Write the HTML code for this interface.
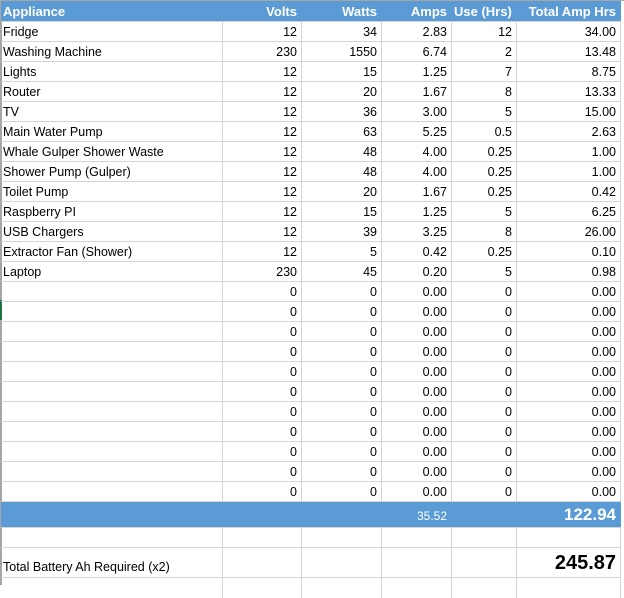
<!DOCTYPE html>
<html><head><meta charset="utf-8"><style>
*{margin:0;padding:0;box-sizing:border-box}
body{width:624px;height:585px;background:#fff;font-family:"Liberation Sans",Arial,sans-serif;font-size:12.5px;color:#000;overflow:hidden;position:relative}
.r{position:absolute;left:1px;display:flex;border-bottom:1px solid #d4d4d4}
.c{flex:none;border-right:1px solid #d4d4d4;padding:0 4px;white-space:nowrap;overflow:hidden;display:flex;align-items:center;justify-content:flex-end}
.c:first-child{justify-content:flex-start;padding-left:2px}
.w1{width:222px}.w2{width:79px}.w3{width:80px}.w4{width:70px}.w5{width:65px}.w6{width:104px}
.h{background:#5b9bd5;color:#fff;font-weight:bold;font-size:13px;border-bottom:1px solid #d4d4d4}
.h .c{border-right-color:#5b9bd5}
.b{background:#5b9bd5;color:#fff}
.b .c{border-right-color:#5b9bd5}
</style></head><body>
<div style="position:absolute;left:0;top:0;width:2px;height:585px;background:#a6a6a6"></div>
<div style="position:absolute;left:0;top:300px;width:2px;height:20px;background:#217346"></div>
<div style="position:absolute;left:0;top:0;width:624px;height:1px;background:#a6a6a6"></div>

<div class="r h" style="top:1px;height:21px"><div class="c w1">Appliance</div><div class="c w2">Volts</div><div class="c w3">Watts</div><div class="c w4">Amps</div><div class="c w5" style="justify-content:flex-start;padding-left:2px">Use (Hrs)</div><div class="c w6">Total Amp Hrs</div></div>

<div class="r" style="top:22px;height:20px"><div class="c w1">Fridge</div><div class="c w2">12</div><div class="c w3">34</div><div class="c w4">2.83</div><div class="c w5">12</div><div class="c w6">34.00</div></div>
<div class="r" style="top:42px;height:20px"><div class="c w1">Washing Machine</div><div class="c w2">230</div><div class="c w3">1550</div><div class="c w4">6.74</div><div class="c w5">2</div><div class="c w6">13.48</div></div>
<div class="r" style="top:62px;height:20px"><div class="c w1">Lights</div><div class="c w2">12</div><div class="c w3">15</div><div class="c w4">1.25</div><div class="c w5">7</div><div class="c w6">8.75</div></div>
<div class="r" style="top:82px;height:20px"><div class="c w1">Router</div><div class="c w2">12</div><div class="c w3">20</div><div class="c w4">1.67</div><div class="c w5">8</div><div class="c w6">13.33</div></div>
<div class="r" style="top:102px;height:20px"><div class="c w1">TV</div><div class="c w2">12</div><div class="c w3">36</div><div class="c w4">3.00</div><div class="c w5">5</div><div class="c w6">15.00</div></div>
<div class="r" style="top:122px;height:20px"><div class="c w1">Main Water Pump</div><div class="c w2">12</div><div class="c w3">63</div><div class="c w4">5.25</div><div class="c w5">0.5</div><div class="c w6">2.63</div></div>
<div class="r" style="top:142px;height:20px"><div class="c w1">Whale Gulper Shower Waste</div><div class="c w2">12</div><div class="c w3">48</div><div class="c w4">4.00</div><div class="c w5">0.25</div><div class="c w6">1.00</div></div>
<div class="r" style="top:162px;height:20px"><div class="c w1">Shower Pump (Gulper)</div><div class="c w2">12</div><div class="c w3">48</div><div class="c w4">4.00</div><div class="c w5">0.25</div><div class="c w6">1.00</div></div>
<div class="r" style="top:182px;height:20px"><div class="c w1">Toilet Pump</div><div class="c w2">12</div><div class="c w3">20</div><div class="c w4">1.67</div><div class="c w5">0.25</div><div class="c w6">0.42</div></div>
<div class="r" style="top:202px;height:20px"><div class="c w1">Raspberry PI</div><div class="c w2">12</div><div class="c w3">15</div><div class="c w4">1.25</div><div class="c w5">5</div><div class="c w6">6.25</div></div>
<div class="r" style="top:222px;height:20px"><div class="c w1">USB Chargers</div><div class="c w2">12</div><div class="c w3">39</div><div class="c w4">3.25</div><div class="c w5">8</div><div class="c w6">26.00</div></div>
<div class="r" style="top:242px;height:20px"><div class="c w1">Extractor Fan (Shower)</div><div class="c w2">12</div><div class="c w3">5</div><div class="c w4">0.42</div><div class="c w5">0.25</div><div class="c w6">0.10</div></div>
<div class="r" style="top:262px;height:20px"><div class="c w1">Laptop</div><div class="c w2">230</div><div class="c w3">45</div><div class="c w4">0.20</div><div class="c w5">5</div><div class="c w6">0.98</div></div>
<div class="r" style="top:282px;height:20px"><div class="c w1"></div><div class="c w2">0</div><div class="c w3">0</div><div class="c w4">0.00</div><div class="c w5">0</div><div class="c w6">0.00</div></div>
<div class="r" style="top:302px;height:20px"><div class="c w1"></div><div class="c w2">0</div><div class="c w3">0</div><div class="c w4">0.00</div><div class="c w5">0</div><div class="c w6">0.00</div></div>
<div class="r" style="top:322px;height:20px"><div class="c w1"></div><div class="c w2">0</div><div class="c w3">0</div><div class="c w4">0.00</div><div class="c w5">0</div><div class="c w6">0.00</div></div>
<div class="r" style="top:342px;height:20px"><div class="c w1"></div><div class="c w2">0</div><div class="c w3">0</div><div class="c w4">0.00</div><div class="c w5">0</div><div class="c w6">0.00</div></div>
<div class="r" style="top:362px;height:20px"><div class="c w1"></div><div class="c w2">0</div><div class="c w3">0</div><div class="c w4">0.00</div><div class="c w5">0</div><div class="c w6">0.00</div></div>
<div class="r" style="top:382px;height:20px"><div class="c w1"></div><div class="c w2">0</div><div class="c w3">0</div><div class="c w4">0.00</div><div class="c w5">0</div><div class="c w6">0.00</div></div>
<div class="r" style="top:402px;height:20px"><div class="c w1"></div><div class="c w2">0</div><div class="c w3">0</div><div class="c w4">0.00</div><div class="c w5">0</div><div class="c w6">0.00</div></div>
<div class="r" style="top:422px;height:20px"><div class="c w1"></div><div class="c w2">0</div><div class="c w3">0</div><div class="c w4">0.00</div><div class="c w5">0</div><div class="c w6">0.00</div></div>
<div class="r" style="top:442px;height:20px"><div class="c w1"></div><div class="c w2">0</div><div class="c w3">0</div><div class="c w4">0.00</div><div class="c w5">0</div><div class="c w6">0.00</div></div>
<div class="r" style="top:462px;height:20px"><div class="c w1"></div><div class="c w2">0</div><div class="c w3">0</div><div class="c w4">0.00</div><div class="c w5">0</div><div class="c w6">0.00</div></div>
<div class="r" style="top:482px;height:20px"><div class="c w1"></div><div class="c w2">0</div><div class="c w3">0</div><div class="c w4">0.00</div><div class="c w5">0</div><div class="c w6">0.00</div></div>

<div class="r b" style="top:502px;height:26px"><div class="c w1"></div><div class="c w2"></div><div class="c w3"></div><div class="c w4" style="font-size:12px;padding-top:2px">35.52</div><div class="c w5"></div><div class="c w6" style="font-weight:bold;font-size:17px">122.94</div></div>
<div class="r" style="top:528px;height:20px"><div class="c w1"></div><div class="c w2"></div><div class="c w3"></div><div class="c w4"></div><div class="c w5"></div><div class="c w6"></div></div>
<div class="r" style="top:548px;height:30px"><div class="c w1" style="padding-top:8px">Total Battery Ah Required (x2)</div><div class="c w2"></div><div class="c w3"></div><div class="c w4"></div><div class="c w5"></div><div class="c w6" style="font-weight:bold;font-size:20px;padding-top:2px">245.87</div></div>
<div class="r" style="top:578px;height:20px;border-bottom:none"><div class="c w1"></div><div class="c w2"></div><div class="c w3"></div><div class="c w4"></div><div class="c w5"></div><div class="c w6"></div></div>
</body></html>
